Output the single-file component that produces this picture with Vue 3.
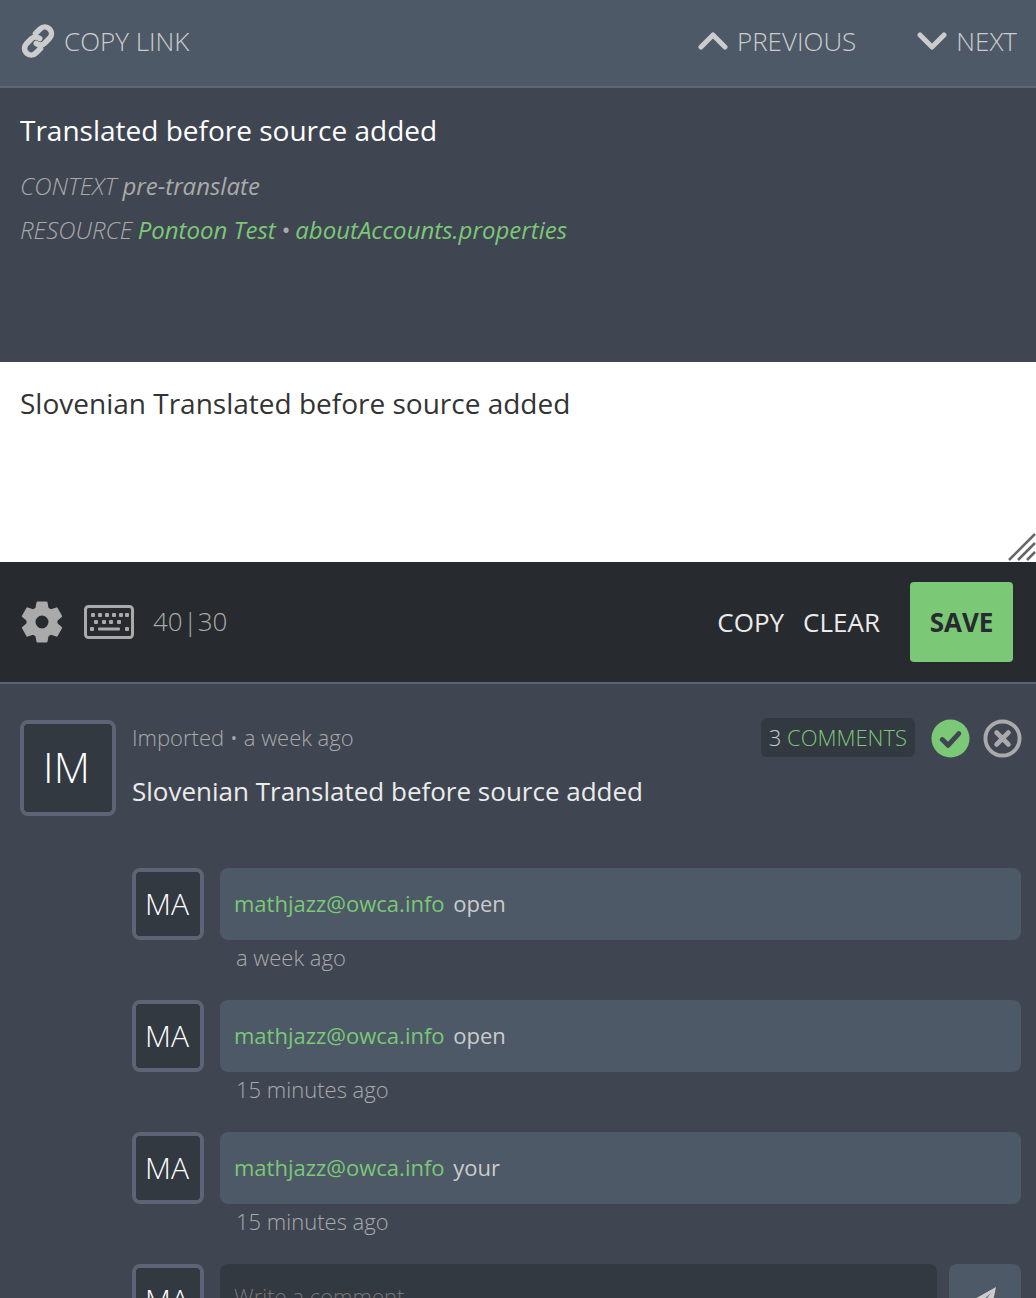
<script setup>
const comments = [
  { author: 'mathjazz@owca.info', text: 'open', time: 'a week ago' },
  { author: 'mathjazz@owca.info', text: 'open', time: '15 minutes ago' },
  { author: 'mathjazz@owca.info', text: 'your', time: '15 minutes ago' }
]
const gearTeeth = [0, 60, 120, 180, 240, 300]
</script>

<template>
  <div class="page">
    <header class="nav">
      <a class="nav-link copy">
        <svg class="link-icon" viewBox="0 0 36 36" fill="none" stroke="#ccc" stroke-width="5.6" stroke-linecap="round">
          <path d="M15.500 10.500l4.600-4.600a6.600 6.600 0 0 1 9.400 9.400l-4.600 4.600a6.600 6.600 0 0 1-8.600.6" />
          <path d="M20.500 25.500l-4.600 4.600a6.600 6.600 0 0 1-9.400-9.400l4.600-4.600a6.600 6.600 0 0 1 8.600-.6" />
        </svg>
        COPY LINK
      </a>
      <a class="nav-link prev">
        <svg class="chevron" viewBox="0 0 30 20" fill="none" stroke="#ccc" stroke-width="5" stroke-linecap="round" stroke-linejoin="round">
          <path d="M3 16L15 4l12 12" />
        </svg>
        PREVIOUS
      </a>
      <a class="nav-link next">
        <svg class="chevron" viewBox="0 0 30 20" fill="none" stroke="#ccc" stroke-width="5" stroke-linecap="round" stroke-linejoin="round">
          <path d="M3 4l12 12L27 4" />
        </svg>
        NEXT
      </a>
    </header>

    <section class="source">
      <h1 class="title">Translated before source added</h1>
      <p class="meta"><span class="label">CONTEXT</span> <span class="value">pre-translate</span></p>
      <p class="meta resource">
        <span class="label">RESOURCE</span>
        <span class="green project"> Pontoon Test</span>
        <span class="value dot"> &bull; </span>
        <span class="green">aboutAccounts.properties</span>
      </p>
    </section>

    <section class="editor">
      <div class="editor-text">Slovenian Translated before source added</div>
      <svg class="resize" viewBox="0 0 28 28" stroke="#666" stroke-width="2.500" fill="none">
        <path d="M1 27L27 1M10 27L27 10M19 27l8-8" />
      </svg>
    </section>

    <section class="toolbar">
      <svg class="gear" viewBox="0 0 42 42" fill="#aaa">
        <circle cx="21" cy="21" r="11" fill="none" stroke="#aaa" stroke-width="9" />
        <path
          v-for="deg in gearTeeth"
          :key="deg"
          d="M16.500 1.500h9l1.500 8h-12z"
          stroke="#aaa"
          stroke-width="2"
          stroke-linejoin="round"
          :transform="`rotate(${deg} 21 21)`"
        />
      </svg>
      <svg class="keyboard" viewBox="0 0 50 34" fill="#aaa">
        <rect x="1.500" y="1.500" width="47" height="31" rx="3" fill="none" stroke="#aaa" stroke-width="3" />
        <rect x="7" y="8" width="4" height="4" rx="1" />
        <rect x="14" y="8" width="4" height="4" rx="1" />
        <rect x="21" y="8" width="4" height="4" rx="1" />
        <rect x="28" y="8" width="4" height="4" rx="1" />
        <rect x="35" y="8" width="4" height="4" rx="1" />
        <rect x="41" y="8" width="4" height="4" rx="1" />
        <rect x="10" y="15" width="4" height="4" rx="1" />
        <rect x="18" y="15" width="4" height="4" rx="1" />
        <rect x="25" y="15" width="4" height="4" rx="1" />
        <rect x="33" y="15" width="4" height="4" rx="1" />
        <rect x="6" y="22" width="4" height="4" rx="1" />
        <rect x="14" y="22.500" width="22" height="3" rx="1" />
        <rect x="41" y="22" width="4" height="4" rx="1" />
      </svg>
      <span class="counter">40<span class="sep">|</span>30</span>
      <div class="spacer"></div>
      <button class="text-btn copy-btn" type="button">COPY</button>
      <button class="text-btn" type="button">CLEAR</button>
      <button class="save" type="button">SAVE</button>
    </section>

    <section class="history">
      <div class="translation">
        <div class="avatar big">IM</div>
        <div class="translation-body">
          <div class="translation-head">
            <span class="user">Imported &bull; a week ago</span>
            <span class="count"><span class="num">3</span> COMMENTS</span>
            <svg class="status" viewBox="0 0 40 40">
              <circle cx="20" cy="20" r="19.500" fill="#7bc876" />
              <path d="M11.500 21l6 6 11-12" fill="none" stroke="#3f4652" stroke-width="5" stroke-linecap="round" stroke-linejoin="round" />
            </svg>
            <svg class="status reject" viewBox="0 0 40 40" fill="none" stroke="#aaa">
              <circle cx="20" cy="20" r="17.500" stroke-width="4" />
              <path d="M14 14l12 12M26 14L14 26" stroke-width="5" stroke-linecap="round" />
            </svg>
          </div>
          <div class="translation-text">Slovenian Translated before source added</div>
        </div>
      </div>

      <div class="comments">
        <div v-for="(c, i) in comments" :key="i" class="comment">
          <div class="avatar">MA</div>
          <div class="comment-body">
            <div class="bubble"><span class="green author">{{ c.author }}</span> {{ c.text }}</div>
            <div class="time">{{ c.time }}</div>
          </div>
        </div>
        <div class="comment add">
          <div class="avatar">MA</div>
          <div class="input">Write a comment&hellip;</div>
          <button class="send" type="button">
            <svg viewBox="0 0 36 36" fill="#ccc">
              <path fill-rule="evenodd" d="M34 2L2 20l9 4 18-16-14 18v8l5-6 8 3z" />
            </svg>
          </button>
        </div>
      </div>
    </section>
  </div>
</template>

<style>
html,
body {
  margin: 0;
  background: #3f4652;
}
</style>

<style scoped>
.page {
  width: 1036px;
  height: 1298px;
  overflow: hidden;
  font-family: "Open Sans", sans-serif;
  color: #ebebeb;
  background: #3f4652;
}

.nav {
  display: flex;
  align-items: center;
  height: 86px;
  box-sizing: content-box;
  padding: 0 19px 0 20px;
  background: #4d5967;
  border-bottom: 2px solid #5e6475;
}

.nav-link {
  display: flex;
  align-items: center;
  margin-bottom: 4px;
  font-size: 26px;
  font-weight: 300;
  color: #ccc;
}

.copy {
  flex: 1;
}

.next {
  margin-left: 61px;
}

.link-icon {
  width: 36px;
  height: 36px;
  margin-right: 8px;
}

.chevron {
  width: 30px;
  height: 20px;
  margin-right: 9px;
}

.source {
  height: 274px;
  box-sizing: border-box;
  padding: 23px 20px 0;
}

.title {
  margin: 0 0 19px;
  font-size: 28px;
  line-height: 38px;
  font-weight: 400;
  color: #fff;
}

.meta {
  margin: 0 0 8px;
  font-size: 24px;
  line-height: 36px;
  font-style: italic;
  font-weight: 300;
  color: #aaa;
}

.value {
  font-weight: 400;
}

.project {
  margin-left: -1px;
}

.dot {
  margin: 0 -1px;
}

.green {
  color: #7bc876;
  font-weight: 400;
}

.editor {
  position: relative;
  height: 200px;
  box-sizing: border-box;
  padding: 22px 20px;
  background: #fff;
  color: #333;
  font-size: 28px;
  line-height: 38px;
}

.resize {
  position: absolute;
  right: 0;
  bottom: 1px;
  width: 28px;
  height: 28px;
}

.toolbar {
  display: flex;
  align-items: center;
  height: 120px;
  box-sizing: border-box;
  padding: 0 23px 0 21px;
  background: #272a2f;
}

.gear {
  width: 42px;
  height: 42px;
}

.keyboard {
  width: 50px;
  height: 34px;
  margin-left: 21px;
}

.counter {
  margin-left: 19px;
  margin-top: -2px;
  font-size: 26px;
  font-weight: 300;
  color: #aaa;
}

.sep {
  margin: 0 0.5px;
}

.spacer {
  flex: 1;
}

.text-btn {
  padding: 0;
  margin-right: 30px;
  border: 0;
  background: none;
  font: 400 26px "Open Sans", sans-serif;
  color: #ebebeb;
}

.copy-btn {
  margin-right: 19px;
}

.save {
  width: 103px;
  height: 80px;
  padding: 0;
  border: 0;
  border-radius: 4px;
  background: #7bc876;
  font: 700 26px "Open Sans", sans-serif;
  color: #272a2f;
}

.history {
  border-top: 2px solid #5e6475;
  padding: 36px 15px 0 20px;
}

.translation {
  display: flex;
  gap: 16px;
}

.avatar {
  flex: none;
  display: flex;
  align-items: center;
  justify-content: center;
  box-sizing: border-box;
  width: 72px;
  height: 72px;
  padding: 0 2px 2px 0;
  border: 4px solid #5e6475;
  border-radius: 8px;
  background: #333941;
  font-size: 30px;
  font-weight: 300;
  color: #fff;
}

.big {
  width: 96px;
  height: 96px;
  padding: 0 3px 4px 0;
  font-size: 42px;
}

.translation-body {
  flex: 1;
  margin-top: -2px;
}

.translation-head {
  display: flex;
  align-items: center;
  height: 40px;
}

.user {
  flex: 1;
  margin-top: -2px;
  font-size: 22px;
  font-weight: 300;
  color: #aaa;
}

.count {
  height: 39px;
  margin-top: -1px;
  line-height: 38px;
  padding: 0 8px;
  border-radius: 6px;
  background: #333941;
  font-size: 22px;
  font-weight: 300;
  color: #7bc876;
}

.num {
  color: #ccc;
}

.status {
  width: 39px;
  height: 39px;
  margin-left: 16px;
}

.reject {
  margin-left: 13px;
  margin-right: -1px;
}

.translation-text {
  margin-top: 14px;
  font-size: 26px;
  line-height: 38px;
  color: #ebebeb;
}

.comments {
  margin: 52px 0 0 112px;
}

.comment {
  display: flex;
  gap: 16px;
  height: 132px;
}

.comment-body {
  flex: 1;
}

.bubble {
  box-sizing: border-box;
  height: 72px;
  padding: 0 14px;
  border-radius: 8px;
  background: #4d5967;
  font-size: 22px;
  line-height: 70px;
  color: #ccc;
}

.author {
  margin-right: 3px;
}

.time {
  margin: 0 0 0 16px;
  font-size: 22px;
  line-height: 34px;
  font-weight: 300;
  color: #aaa;
}

.input {
  flex: 1;
  height: 72px;
  box-sizing: border-box;
  padding: 0 14px;
  border-radius: 8px;
  background: #333941;
  font-size: 22px;
  line-height: 64px;
  font-weight: 300;
  color: #777;
}

.send {
  flex: none;
  display: flex;
  align-items: flex-start;
  width: 72px;
  height: 72px;
  margin-left: -4px;
  padding: 21px 0 0 13px;
  border: 0;
  border-radius: 8px;
  background: #4d5967;
}

.send svg {
  display: block;
  width: 36px;
  height: 36px;
}
</style>
